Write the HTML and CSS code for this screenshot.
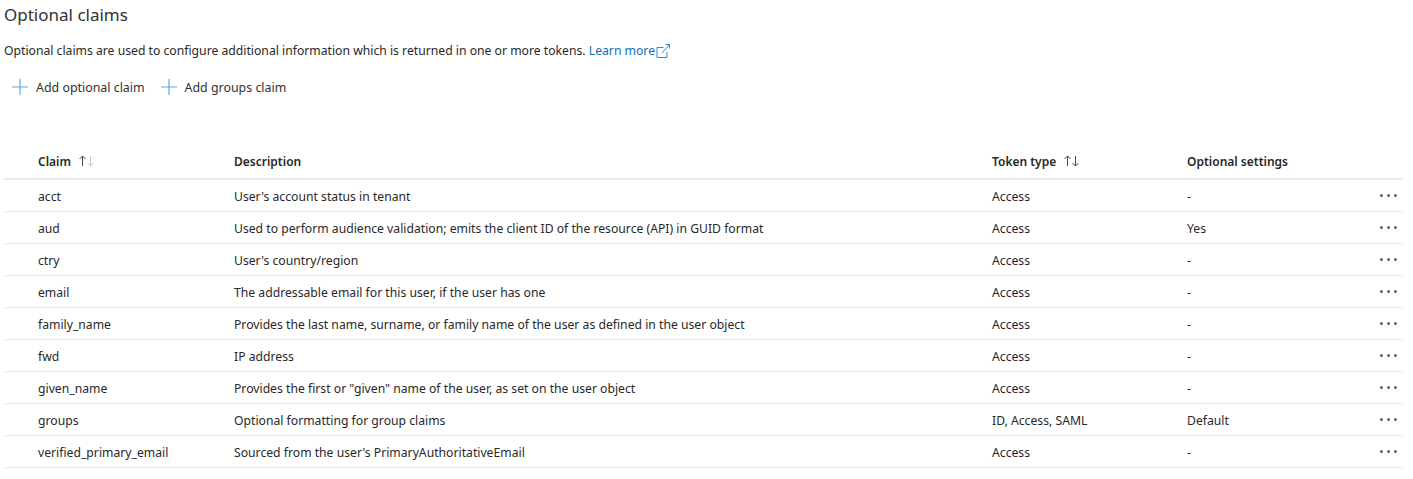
FILE: index.html
```html
<!DOCTYPE html>
<html lang="en">
<head>
    <meta charset="UTF-8">
    <title>Optional claims</title>
    <link rel="stylesheet" href="styles.css">
</head>
<body>
    <h2 class="title">Optional claims</h2>
    <p class="intro">
        Optional claims are used to configure additional information which is returned in one or more tokens.
        <a href="#" class="learn-link">Learn more<svg class="external-icon" viewBox="0 0 14 14"><path d="M7.5 3.500H1v10h10V8M6 9l7.500-8.500M9.500.5h4v4"/></svg></a>
    </p>
    <div class="toolbar">
        <button class="tool-btn"><svg class="plus-icon" viewBox="0 0 16 16"><path d="M8 0v16M0 8h16"/></svg>Add optional claim</button>
        <button class="tool-btn"><svg class="plus-icon" viewBox="0 0 16 16"><path d="M8 0v16M0 8h16"/></svg>Add groups claim</button>
    </div>
    <table class="claims-table">
        <thead>
            <tr>
                <th class="col-claim">Claim <svg class="sort-icon" viewBox="0 0 18 12"><path d="M4.500 11V1M1.500 4l3-3 3 3"/><path class="faded" d="M12.500 1v10M9.500 8l3 3 3-3"/></svg></th>
                <th class="col-desc">Description</th>
                <th class="col-token">Token type <svg class="sort-icon" viewBox="0 0 18 12"><path d="M4.500 11V1M1.500 4l3-3 3 3"/><path d="M12.500 1v10M9.500 8l3 3 3-3"/></svg></th>
                <th class="col-settings">Optional settings</th>
                <th class="col-more"></th>
            </tr>
        </thead>
        <tbody>
            <tr><td>acct</td><td>User's account status in tenant</td><td>Access</td><td>-</td><td class="more"><svg class="more-icon" viewBox="0 0 17 3"><circle cx="1.500" cy="1.500" r="1.500"/><circle cx="8.500" cy="1.500" r="1.500"/><circle cx="15.500" cy="1.500" r="1.500"/></svg></td></tr>
            <tr><td>aud</td><td>Used to perform audience validation; emits the client ID of the resource (API) in GUID format</td><td>Access</td><td>Yes</td><td class="more"><svg class="more-icon" viewBox="0 0 17 3"><circle cx="1.500" cy="1.500" r="1.500"/><circle cx="8.500" cy="1.500" r="1.500"/><circle cx="15.500" cy="1.500" r="1.500"/></svg></td></tr>
            <tr><td>ctry</td><td>User's country/region</td><td>Access</td><td>-</td><td class="more"><svg class="more-icon" viewBox="0 0 17 3"><circle cx="1.500" cy="1.500" r="1.500"/><circle cx="8.500" cy="1.500" r="1.500"/><circle cx="15.500" cy="1.500" r="1.500"/></svg></td></tr>
            <tr><td>email</td><td>The addressable email for this user, if the user has one</td><td>Access</td><td>-</td><td class="more"><svg class="more-icon" viewBox="0 0 17 3"><circle cx="1.500" cy="1.500" r="1.500"/><circle cx="8.500" cy="1.500" r="1.500"/><circle cx="15.500" cy="1.500" r="1.500"/></svg></td></tr>
            <tr><td>family_name</td><td>Provides the last name, surname, or family name of the user as defined in the user object</td><td>Access</td><td>-</td><td class="more"><svg class="more-icon" viewBox="0 0 17 3"><circle cx="1.500" cy="1.500" r="1.500"/><circle cx="8.500" cy="1.500" r="1.500"/><circle cx="15.500" cy="1.500" r="1.500"/></svg></td></tr>
            <tr><td>fwd</td><td>IP address</td><td>Access</td><td>-</td><td class="more"><svg class="more-icon" viewBox="0 0 17 3"><circle cx="1.500" cy="1.500" r="1.500"/><circle cx="8.500" cy="1.500" r="1.500"/><circle cx="15.500" cy="1.500" r="1.500"/></svg></td></tr>
            <tr><td>given_name</td><td>Provides the first or "given" name of the user, as set on the user object</td><td>Access</td><td>-</td><td class="more"><svg class="more-icon" viewBox="0 0 17 3"><circle cx="1.500" cy="1.500" r="1.500"/><circle cx="8.500" cy="1.500" r="1.500"/><circle cx="15.500" cy="1.500" r="1.500"/></svg></td></tr>
            <tr><td>groups</td><td>Optional formatting for group claims</td><td>ID, Access, SAML</td><td>Default</td><td class="more"><svg class="more-icon" viewBox="0 0 17 3"><circle cx="1.500" cy="1.500" r="1.500"/><circle cx="8.500" cy="1.500" r="1.500"/><circle cx="15.500" cy="1.500" r="1.500"/></svg></td></tr>
            <tr><td>verified_primary_email</td><td>Sourced from the user's PrimaryAuthoritativeEmail</td><td>Access</td><td>-</td><td class="more"><svg class="more-icon" viewBox="0 0 17 3"><circle cx="1.500" cy="1.500" r="1.500"/><circle cx="8.500" cy="1.500" r="1.500"/><circle cx="15.500" cy="1.500" r="1.500"/></svg></td></tr>
        </tbody>
    </table>
</body>
</html>
```

FILE: styles.css
```css
body {
    font-family: "Noto Sans", "Open Sans", sans-serif;
    font-size: 12.2px;
    margin: 0;
    padding: 0 10px 0 4px;
    background-color: white;
    color: #292827;
}

.title {
    margin: 0;
    padding-top: 3px;
    font-size: 17px;
    line-height: 24px;
    font-weight: 400;
    color: #323130;
}

.intro {
    margin: 15px 0 0 0;
    line-height: 18px;
}

.learn-link {
    color: #0f6cbd;
    text-decoration: none;
}

.external-icon {
    width: 14px;
    height: 14px;
    margin-left: 1px;
    vertical-align: -3px;
    fill: none;
    stroke: #2b88d8;
    stroke-width: 1;
}

.toolbar {
    display: flex;
    gap: 16px;
    margin-top: 17px;
    padding-left: 8px;
}

.tool-btn {
    display: flex;
    align-items: center;
    gap: 8px;
    padding: 0;
    height: 20px;
    border: none;
    background: none;
    font: inherit;
    font-size: 12.4px;
    color: #323130;
}

.plus-icon {
    width: 16px;
    height: 16px;
    fill: none;
    stroke: #5ca9e5;
    stroke-width: 1.200;
}

.claims-table {
    width: 1399px;
    margin-top: 45px;
    border-collapse: collapse;
    table-layout: fixed;
}

.claims-table th,
.claims-table td {
    padding: 0;
    text-align: left;
    white-space: nowrap;
}

.claims-table th {
    height: 33px;
    padding-top: 3px;
    font-size: 12px;
    font-weight: 600;
    border-bottom: 2px solid #edebe9;
}

.claims-table td {
    height: 30px;
    padding-top: 1px;
    border-bottom: 1px solid #edebe9;
}

.col-claim {
    width: 230px;
    box-sizing: border-box;
}

.col-desc {
    width: 758px;
}

.col-token {
    width: 195px;
}

.col-settings {
    width: 190px;
}

.claims-table th:first-child,
.claims-table td:first-child {
    padding-left: 34px;
}

.sort-icon {
    width: 18px;
    height: 12px;
    margin-left: 4px;
    vertical-align: -1px;
    fill: none;
    stroke: #484644;
    stroke-width: 1;
}

.sort-icon .faded {
    stroke: #c8c6c4;
}

.claims-table td.more {
    text-align: right;
    padding-right: 6px;
}

.more-icon {
    width: 17px;
    height: 3px;
    margin-bottom: 4px;
    fill: #605e5c;
}
```
